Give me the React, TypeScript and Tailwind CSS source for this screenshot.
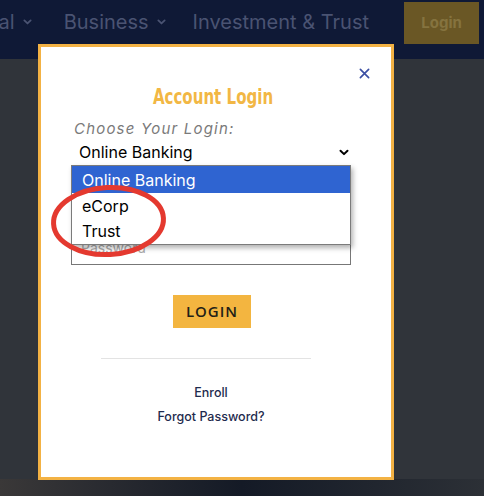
import React from "react";

const sans = { fontFamily: 'Inter, "Noto Sans", sans-serif' };

function Chevron({ className }: { className?: string }) {
  return (
    <svg viewBox="0 0 10 6" className={className} fill="none" stroke="currentColor" strokeWidth="2" strokeLinecap="round" strokeLinejoin="round">
      <path d="M1.5 1.2 5 4.6 8.5 1.2" />
    </svg>
  );
}

export default function App() {
  return (
    <div
      className="relative w-[484px] h-[496px] overflow-hidden bg-[#30343a]"
      style={sans}
    >
      {/* nav */}
      <div className="h-[59px] bg-[#0f1936] flex items-start justify-end pr-[5px] overflow-hidden whitespace-nowrap">
        <div className="flex items-center h-[44px] text-[20px] text-[#4a5372] shrink-0">
          <span className="flex items-center gap-[8px]">
            Personal
            <Chevron className="w-[9px] h-[6px] text-[#4a5372]" />
          </span>
          <span className="flex items-center gap-[8px] ml-[32px]">
            Business
            <Chevron className="w-[9px] h-[6px] text-[#4a5372]" />
          </span>
          <span className="ml-[27px]">Investment &amp; Trust</span>
          <div className="ml-[35px] w-[75px] h-[42px] mt-[2px] bg-[#6a5725] flex items-center justify-center text-[15px] font-bold text-[#85733f]">
            Login
          </div>
        </div>
      </div>

      {/* backdrop bottom image hint */}
      <div className="absolute left-0 right-0 bottom-0 h-[17px] bg-gradient-to-r from-[#3a3838] via-[#141a26] to-[#2c3036]" />

      {/* modal */}
      <div className="absolute left-[38px] top-[44px] w-[356px] h-[436px] border-[3px] border-[#f3b244] bg-white">
        <div className="absolute right-[21px] top-[21px] text-[#3b4fa3]">
          <svg viewBox="0 0 12 12" className="w-[11px] h-[11px]" stroke="currentColor" strokeWidth="1.8" strokeLinecap="round">
            <path d="M1.5 1.5 10.5 10.5M10.5 1.5 1.5 10.5" />
          </svg>
        </div>

        <div className="flex flex-col">
          <div
            className="mt-[38px] ml-[-6px] text-center text-[22px] leading-[24px] font-bold text-[#f2b744] scale-x-[0.76]"
            style={{ fontFamily: '"DejaVu Sans Condensed", "DejaVu Sans", sans-serif', fontStretch: "condensed" }}
          >
            Account Login
          </div>

          <div className="relative ml-[30px] w-[280px]">
            <div className="mt-[10px] ml-[3px] text-[15px] leading-[20px] italic tracking-[1.2px] text-[#7a7a7a]">
              Choose Your Login:
            </div>
            <div className="mt-[1px] h-[24px] flex items-center justify-between pl-[8px] pr-[2px] text-[16px] text-black">
              <span>Online Banking</span>
              <Chevron className="w-[10px] h-[7px] text-black" />
            </div>

            {/* username input (covered) */}
            <div className="mt-[12px] h-[30px] border border-[#777]" />
            {/* password input */}
            <div className="mt-[26px] h-[33px] border border-[#777] flex items-start pt-[4px] pl-[9px] text-[14px] text-[#aaa]">
              Password
            </div>

            {/* open dropdown list */}
            <div className="absolute left-0 top-[56px] w-[280px] bg-white border border-[#7b7b7b] shadow-[2px_3px_5px_rgba(0,0,0,0.3)] text-[16px]">
              <div className="h-[27px] flex items-center pl-[10px] bg-[#2f64d1] text-white">Online Banking</div>
              <div className="h-[25px] flex items-center pl-[10px] text-black">eCorp</div>
              <div className="h-[26px] flex items-center pl-[10px] text-black">Trust</div>
            </div>
          </div>

          <div className="mt-[30px] self-center ml-[-8px] w-[78px] h-[33px] bg-[#f3b540] flex items-center justify-center text-[15px] font-semibold tracking-[1px] text-[#231f17]" style={{ fontFamily: '"Open Sans", sans-serif' }}>
            LOGIN
          </div>

          <div className="mt-[30px] ml-[60px] w-[210px] h-px bg-[#e3e3e3]" />

          <div className="mt-[25px] ml-[-10px] flex flex-col items-center gap-[6px] text-[12.5px] leading-[18px] font-medium text-[#1f2b4e]">
            <span>Enroll</span>
            <span>Forgot Password?</span>
          </div>
        </div>
      </div>

      {/* red annotation ellipse */}
      <svg className="absolute left-0 top-0 w-[484px] h-[496px] pointer-events-none" viewBox="0 0 484 496">
        <ellipse cx="108.5" cy="221" rx="55" ry="33.5" fill="none" stroke="#e4392f" strokeWidth="5" transform="rotate(-3 108.5 221)" />
      </svg>
    </div>
  );
}
